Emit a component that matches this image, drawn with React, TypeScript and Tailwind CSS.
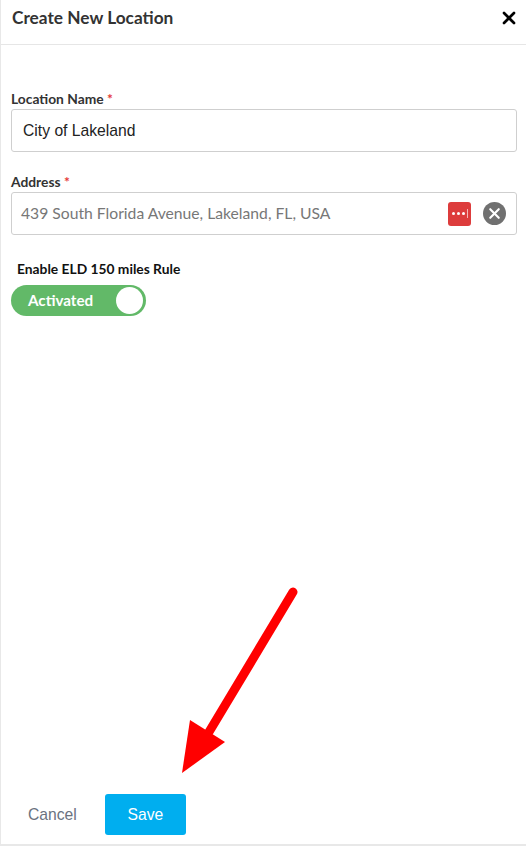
import { X } from "lucide-react";

const outfit = "font-['Lato','Noto_Sans',sans-serif]";

function FieldLabel({ text }: { text: string }) {
  return (
    <label className={`block text-[13.8px] leading-[18px] font-bold text-[#333] ${outfit}`}>
      {text} <span className="text-[#e53935]">*</span>
    </label>
  );
}

export default function App() {
  return (
    <div className="relative h-[847px] w-[526px] overflow-hidden bg-white">
      <div className="flex h-[846px] flex-col border-b-2 border-l border-[#e8e8e8]">
        {/* Header */}
        <div className="flex h-[45px] shrink-0 items-center justify-between border-b border-[#e6e6e6] pb-[8px] pl-[11px] pr-[7px]">
          <h1 className={`text-[17.3px] font-bold text-[#333] ${outfit}`}>Create New Location</h1>
          <X className="h-[20px] w-[20px] text-black" strokeWidth={3.2} />
        </div>

        {/* Form */}
        <div className="flex flex-1 flex-col pl-[10px] pr-[9px] pt-[45px]">
          <FieldLabel text="Location Name" />
          <div className="mt-[1px] flex h-[43px] items-center rounded-[3px] border border-[#cfcfcf] pl-[11px]">
            <span className="font-['Liberation_Sans',sans-serif] text-[15.7px] text-[#222]">City of Lakeland</span>
          </div>

          <div className="mt-[21px]">
            <FieldLabel text="Address" />
          </div>
          <div className="mt-[1px] flex h-[43px] items-center justify-between rounded-[3px] border border-[#cfcfcf] pl-[9px] pr-[10px]">
            <span className={`mt-[1px] text-[15.7px] text-[#777] ${outfit}`}>439 South Florida Avenue, Lakeland, FL, USA</span>
            <div className="flex items-center gap-[12px]">
              <div className="flex h-[24px] w-[23px] items-center justify-center gap-[2px] rounded-[3px] bg-[#dd3c3c]">
                <span className="h-[3px] w-[3px] rounded-full bg-white" />
                <span className="h-[3px] w-[3px] rounded-full bg-white" />
                <span className="h-[3px] w-[3px] rounded-full bg-white" />
                <span className="h-[9px] w-[1px] bg-[#f5b5b5]" />
              </div>
              <div className="flex h-[23px] w-[23px] items-center justify-center rounded-full bg-[#707070]">
                <X className="h-[17px] w-[17px] text-white" strokeWidth={3} />
              </div>
            </div>
          </div>

          <div className={`mt-[25px] pl-[6px] text-[13.8px] leading-[18px] font-bold text-[#111] ${outfit}`}>
            Enable ELD 150 miles Rule
          </div>
          <div className="mt-[7px] flex h-[31px] w-[135px] items-center justify-between rounded-full bg-[#62b968] pl-[17px] pr-[3px]">
            <span className={`text-[15.2px] font-bold text-white ${outfit}`}>Activated</span>
            <span className="h-[27px] w-[27px] rounded-full bg-white" />
          </div>

          {/* Footer */}
          <div className="mt-auto mb-[9px] flex items-center pl-[17px]">
            <button className="font-['Liberation_Sans',sans-serif] text-[15.7px] text-[#6b7280]">Cancel</button>
            <button className="ml-[28px] flex h-[41px] w-[81px] items-center justify-center rounded-[3px] bg-[#00aeef] font-['Liberation_Sans',sans-serif] text-[15.7px] text-white">
              Save
            </button>
          </div>
        </div>
      </div>

      {/* Annotation arrow */}
      <svg className="absolute inset-0" width="526" height="847" viewBox="0 0 526 847" fill="none">
        <path d="M293 592 L209 732" stroke="#ff0000" strokeWidth="9" strokeLinecap="round" />
        <path d="M190 720 L225 742 L182 773 Z" fill="#ff0000" />
      </svg>
    </div>
  );
}
